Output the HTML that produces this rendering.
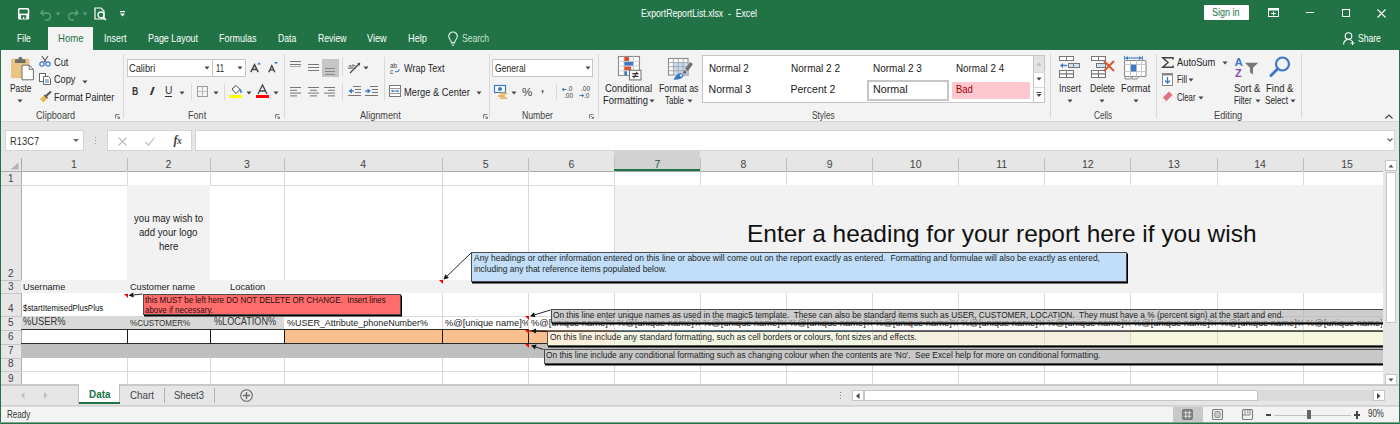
<!DOCTYPE html><html><head><meta charset="utf-8"><style>
html,body{margin:0;padding:0;}
body{width:1400px;height:424px;overflow:hidden;position:relative;background:#f3f3f3;font-family:"Liberation Sans",sans-serif;}
.t{position:absolute;white-space:pre;font-family:"Liberation Sans",sans-serif;transform-origin:0 0;}
svg{overflow:visible}
</style></head><body>
<div style="position:absolute;left:0px;top:0px;width:1400px;height:50px;background:#217346"></div>
<div style="position:absolute;left:48px;top:27px;width:45px;height:23px;background:#f3f3f3"></div>
<div class="t" style="left:641.00px;top:8.00px;font-size:10px;line-height:11px;color:#ffffff;transform:scaleX(0.8696);">ExportReportList.xlsx  -  Excel</div>
<div class="t" style="left:16.60px;top:32.00px;font-size:10.5px;line-height:12px;color:#ffffff;transform:scaleX(0.8163);">File</div>
<div class="t" style="left:104.00px;top:32.00px;font-size:10.5px;line-height:12px;color:#ffffff;transform:scaleX(0.8533);">Insert</div>
<div class="t" style="left:147.90px;top:32.00px;font-size:10.5px;line-height:12px;color:#ffffff;transform:scaleX(0.8481);">Page Layout</div>
<div class="t" style="left:219.30px;top:32.00px;font-size:10.5px;line-height:12px;color:#ffffff;transform:scaleX(0.8565);">Formulas</div>
<div class="t" style="left:278.20px;top:32.00px;font-size:10.5px;line-height:12px;color:#ffffff;transform:scaleX(0.8195);">Data</div>
<div class="t" style="left:317.80px;top:32.00px;font-size:10.5px;line-height:12px;color:#ffffff;transform:scaleX(0.8275);">Review</div>
<div class="t" style="left:367.10px;top:32.00px;font-size:10.5px;line-height:12px;color:#ffffff;transform:scaleX(0.8726);">View</div>
<div class="t" style="left:407.80px;top:32.00px;font-size:10.5px;line-height:12px;color:#ffffff;transform:scaleX(0.8759);">Help</div>
<div class="t" style="left:57.50px;top:32.00px;font-size:10.5px;line-height:12px;color:#217346;transform:scaleX(0.9096);">Home</div>
<div class="t" style="left:461.80px;top:32.00px;font-size:10.5px;line-height:12px;color:#cfe2d6;transform:scaleX(0.8112);">Search</div>
<svg style="position:absolute;left:448px;top:31px;" width="10" height="16" viewBox="0 0 10 16"><path d="M5 1a4.3 4.3 0 0 0-4.3 4.3c0 2.2 1.6 3.4 2.6 5.2v1.3h3.4v-1.3c1-1.8 2.6-3 2.6-5.2A4.3 4.3 0 0 0 5 1z" fill="none" stroke="#e6efe9" stroke-width="1.1"/><path d="M3.6 13h2.8M4.2 14.5h1.6" stroke="#cfe2d6" stroke-width="1"/></svg>
<svg style="position:absolute;left:17px;top:7px;" width="13" height="13" viewBox="0 0 13 13"><rect x="1.7" y="1.7" width="9.8" height="10" rx="0.8" fill="none" stroke="#fff" stroke-width="1.5"/><rect x="1.7" y="6.6" width="9.8" height="5.1" fill="#fff"/><rect x="4" y="8.2" width="5.2" height="3.5" fill="#217346"/><rect x="6" y="9.8" width="1.3" height="1.9" fill="#fff"/></svg>
<svg style="position:absolute;left:40px;top:8px;" width="12" height="12" viewBox="0 0 12 12"><path d="M3 2 L1 5 L4 7.5 M1.5 5 H7 a3.5 3.5 0 0 1 0 7 H5" fill="none" stroke="#5fa07c" stroke-width="1.4"/></svg>
<svg style="position:absolute;left:55px;top:12px;" width="6" height="4" viewBox="0 0 6 4"><path d="M0.5 0.5 L5.5 0.5 L3 3.5 Z" fill="#5fa07c"/></svg>
<svg style="position:absolute;left:67px;top:8px;" width="12" height="12" viewBox="0 0 12 12"><path d="M9 2 L11 5 L8 7.5 M10.5 5 H5 a3.5 3.5 0 0 0 0 7 H7" fill="none" stroke="#5fa07c" stroke-width="1.4"/></svg>
<svg style="position:absolute;left:82px;top:12px;" width="6" height="4" viewBox="0 0 6 4"><path d="M0.5 0.5 L5.5 0.5 L3 3.5 Z" fill="#5fa07c"/></svg>
<svg style="position:absolute;left:94px;top:7px;" width="13" height="14" viewBox="0 0 13 14"><path d="M1 1h6l3 3v8H1z" fill="none" stroke="#fff" stroke-width="1.2"/><circle cx="7" cy="8" r="3" fill="none" stroke="#fff" stroke-width="1.3"/><path d="M9 10l3 3" stroke="#fff" stroke-width="1.5"/></svg>
<svg style="position:absolute;left:120px;top:11px;" width="5" height="6" viewBox="0 0 5 6"><rect x="0" y="0" width="5" height="1.2" fill="#fff"/><path d="M0 2.5h5L2.5 5.5z" fill="#fff"/></svg>
<div style="position:absolute;left:1203.5px;top:5px;width:45px;height:15px;background:#ffffff;border-radius:1px"></div>
<div class="t" style="left:1212.20px;top:6.00px;font-size:10.5px;line-height:12px;color:#217346;transform:scaleX(0.8590);">Sign in</div>
<svg style="position:absolute;left:1268px;top:8px;" width="11" height="9" viewBox="0 0 11 9"><rect x="0.5" y="0.5" width="10" height="8" fill="none" stroke="#fff" stroke-width="1"/><rect x="0.5" y="0.5" width="10" height="2" fill="#fff"/><path d="M3 5.5h5M5.5 3.5v4" stroke="#fff" stroke-width="1"/></svg>
<div style="position:absolute;left:1306px;top:12px;width:8px;height:1px;background:#fff"></div>
<div style="position:absolute;left:1341.5px;top:8.5px;width:8px;height:8px;border:1px solid #fff;box-sizing:border-box"></div>
<svg style="position:absolute;left:1377px;top:8.5px;" width="9" height="9" viewBox="0 0 9 9"><path d="M0.5 0.5L8.5 8.5M8.5 0.5L0.5 8.5" stroke="#fff" stroke-width="1.1"/></svg>
<svg style="position:absolute;left:1343px;top:32px;" width="13" height="13" viewBox="0 0 13 13"><circle cx="5.5" cy="4" r="3.3" fill="none" stroke="#fff" stroke-width="1.1"/><path d="M0.5 12.5 Q1 7.5 5.5 7.5 Q8 7.5 9 9" fill="none" stroke="#fff" stroke-width="1.1"/><path d="M9.5 9v4M7.5 11h4" stroke="#fff" stroke-width="1.1"/></svg>
<div class="t" style="left:1358.00px;top:32.00px;font-size:10.5px;line-height:12px;color:#ffffff;transform:scaleX(0.8133);">Share</div>
<div style="position:absolute;left:0px;top:50px;width:1400px;height:72px;background:#f3f3f3;border-bottom:1px solid #d5d5d5;box-sizing:border-box"></div>
<div style="position:absolute;left:123px;top:54px;width:1px;height:64px;background:#d9d9d9"></div>
<div style="position:absolute;left:283.6px;top:54px;width:1px;height:64px;background:#d9d9d9"></div>
<div style="position:absolute;left:488.5px;top:54px;width:1px;height:64px;background:#d9d9d9"></div>
<div style="position:absolute;left:597.6px;top:54px;width:1px;height:64px;background:#d9d9d9"></div>
<div style="position:absolute;left:1050px;top:54px;width:1px;height:64px;background:#d9d9d9"></div>
<div style="position:absolute;left:1156px;top:54px;width:1px;height:64px;background:#d9d9d9"></div>
<div style="position:absolute;left:1301px;top:54px;width:1px;height:64px;background:#d9d9d9"></div>
<div class="t" style="left:36.10px;top:110.00px;font-size:10px;line-height:11px;color:#444444;transform:scaleX(0.9136);">Clipboard</div>
<div class="t" style="left:188.10px;top:110.00px;font-size:10px;line-height:11px;color:#444444;transform:scaleX(0.9100);">Font</div>
<div class="t" style="left:359.60px;top:110.00px;font-size:10px;line-height:11px;color:#444444;transform:scaleX(0.9156);">Alignment</div>
<div class="t" style="left:521.60px;top:110.00px;font-size:10px;line-height:11px;color:#444444;transform:scaleX(0.8692);">Number</div>
<div class="t" style="left:812.00px;top:110.00px;font-size:10px;line-height:11px;color:#444444;transform:scaleX(0.8330);">Styles</div>
<div class="t" style="left:1093.60px;top:110.00px;font-size:10px;line-height:11px;color:#444444;transform:scaleX(0.8180);">Cells</div>
<div class="t" style="left:1213.80px;top:110.00px;font-size:10px;line-height:11px;color:#444444;transform:scaleX(0.9216);">Editing</div>
<svg style="position:absolute;left:114.5px;top:114px;" width="5" height="5" viewBox="0 0 5 5"><path d="M0.5 4.5V0.5H4.5" fill="none" stroke="#777" stroke-width="0.9"/><path d="M1.5 1.5L4.5 4.5M2.5 4.5H4.5V2.5" fill="none" stroke="#777" stroke-width="0.9"/></svg>
<svg style="position:absolute;left:275px;top:114px;" width="5" height="5" viewBox="0 0 5 5"><path d="M0.5 4.5V0.5H4.5" fill="none" stroke="#777" stroke-width="0.9"/><path d="M1.5 1.5L4.5 4.5M2.5 4.5H4.5V2.5" fill="none" stroke="#777" stroke-width="0.9"/></svg>
<svg style="position:absolute;left:482.5px;top:114px;" width="5" height="5" viewBox="0 0 5 5"><path d="M0.5 4.5V0.5H4.5" fill="none" stroke="#777" stroke-width="0.9"/><path d="M1.5 1.5L4.5 4.5M2.5 4.5H4.5V2.5" fill="none" stroke="#777" stroke-width="0.9"/></svg>
<svg style="position:absolute;left:588.8px;top:114px;" width="5" height="5" viewBox="0 0 5 5"><path d="M0.5 4.5V0.5H4.5" fill="none" stroke="#777" stroke-width="0.9"/><path d="M1.5 1.5L4.5 4.5M2.5 4.5H4.5V2.5" fill="none" stroke="#777" stroke-width="0.9"/></svg>
<svg style="position:absolute;left:1385px;top:114px;" width="8" height="5" viewBox="0 0 8 5"><path d="M0.5 4.5L4 1L7.5 4.5" fill="none" stroke="#444" stroke-width="1.2"/></svg>
<svg style="position:absolute;left:10px;top:56px;" width="24" height="25" viewBox="0 0 24 25"><rect x="1" y="2.8" width="18.5" height="19.5" rx="1.2" fill="#e8c582"/><path d="M5 7V4.2Q5 3.2 6 3.2H8.3Q8.6 0.8 10.3 0.8Q12 0.8 12.3 3.2H14.6Q15.6 3.2 15.6 4.2V7Z" fill="#6d6d6d"/><path d="M12 9.2h7.2l4.2 4.2v10.4H12z" fill="#fff" stroke="#6d6d6d" stroke-width="1"/><path d="M19.2 9.2v4.2h4.2" fill="none" stroke="#6d6d6d" stroke-width="1"/></svg>
<div class="t" style="left:9.60px;top:82.00px;font-size:10.5px;line-height:12px;color:#262626;transform:scaleX(0.8014);">Paste</div>
<svg style="position:absolute;left:17px;top:99px;" width="6" height="4" viewBox="0 0 6 4"><path d="M0.5 0.5 L5.5 0.5 L3 3.5 Z" fill="#444"/></svg>
<svg style="position:absolute;left:39px;top:55px;" width="12" height="12" viewBox="0 0 12 12"><path d="M3 1L7 7M9 1L5 7" stroke="#555" stroke-width="1.1"/><circle cx="3" cy="9" r="2.2" fill="none" stroke="#3c78c8" stroke-width="1.2"/><circle cx="9" cy="9" r="2.2" fill="none" stroke="#3c78c8" stroke-width="1.2"/></svg>
<div class="t" style="left:53.80px;top:56.00px;font-size:10.5px;line-height:12px;color:#262626;transform:scaleX(0.8819);">Cut</div>
<svg style="position:absolute;left:39px;top:73px;" width="12" height="12" viewBox="0 0 12 12"><rect x="0.5" y="0.5" width="6" height="8" fill="#fff" stroke="#666"/><path d="M4.5 3.5h5l2 2v6h-7z" fill="#fff" stroke="#666"/><path d="M6 7h4M6 9h4" stroke="#3c78c8"/></svg>
<div class="t" style="left:53.80px;top:73.00px;font-size:10.5px;line-height:12px;color:#262626;transform:scaleX(0.8728);">Copy</div>
<svg style="position:absolute;left:82px;top:80px;" width="6" height="4" viewBox="0 0 6 4"><path d="M0.5 0.5 L5.5 0.5 L3 3.5 Z" fill="#444"/></svg>
<svg style="position:absolute;left:39px;top:91px;" width="13" height="12" viewBox="0 0 13 12"><path d="M7 5L12 0.5" stroke="#555" stroke-width="2"/><path d="M1 8L6 3.5L9 6.5L4.5 11.5Z" fill="#e8b45a"/><path d="M5.5 4L8.5 7" stroke="#555" stroke-width="1.6"/></svg>
<div class="t" style="left:53.80px;top:91.00px;font-size:10.5px;line-height:12px;color:#262626;transform:scaleX(0.8667);">Format Painter</div>
<div style="position:absolute;left:126.7px;top:59px;width:86px;height:18px;background:#fff;border:1px solid #c6c6c6;box-sizing:border-box"></div>
<div style="position:absolute;left:212px;top:59px;width:34px;height:18px;background:#fff;border:1px solid #c6c6c6;box-sizing:border-box"></div>
<div class="t" style="left:129.20px;top:63.00px;font-size:10px;line-height:11px;color:#262626;transform:scaleX(0.9242);">Calibri</div>
<svg style="position:absolute;left:203.7px;top:66px;" width="6" height="4" viewBox="0 0 6 4"><path d="M0.5 0.5 L5.5 0.5 L3 3.5 Z" fill="#444"/></svg>
<div class="t" style="left:215.50px;top:63.00px;font-size:10px;line-height:11px;color:#262626;transform:scaleX(0.7692);">11</div>
<svg style="position:absolute;left:237.3px;top:66px;" width="6" height="4" viewBox="0 0 6 4"><path d="M0.5 0.5 L5.5 0.5 L3 3.5 Z" fill="#444"/></svg>
<svg style="position:absolute;left:249px;top:60px;" width="14" height="14" viewBox="0 0 14 14"><path d="M1.8 12.2L5.5 4.6L9.2 12.2M3.2 9.5h4.6" fill="none" stroke="#444" stroke-width="1.5"/><path d="M8 4.4L10 2.2L12 4.4Z" fill="#3c78c8"/></svg>
<svg style="position:absolute;left:267px;top:60px;" width="12" height="14" viewBox="0 0 12 14"><path d="M1.8 12.2L4.8 5.6L7.8 12.2M2.9 9.9h3.8" fill="none" stroke="#444" stroke-width="1.35"/><path d="M7 2H11L9 4.2Z" fill="#3c78c8"/></svg>
<div class="t" style="left:131.50px;top:85.00px;font-size:10.5px;line-height:12px;color:#333;font-weight:700;transform:scaleX(0.8201);">B</div>
<div class="t" style="left:149.00px;top:85.00px;font-size:10.5px;line-height:12px;color:#333;transform:scaleX(2.0408);font-style:italic;">I</div>
<div class="t" style="left:165.00px;top:84.00px;font-size:10.5px;line-height:12px;color:#333;transform:scaleX(0.9788);">U</div>
<div style="position:absolute;left:165px;top:96px;width:7.4px;height:1px;background:#333"></div>
<svg style="position:absolute;left:179px;top:91px;" width="6" height="4" viewBox="0 0 6 4"><path d="M0.5 0.5 L5.5 0.5 L3 3.5 Z" fill="#444"/></svg>
<div style="position:absolute;left:190.8px;top:84px;width:1px;height:16px;background:#d9d9d9"></div>
<svg style="position:absolute;left:197px;top:86px;" width="11" height="11" viewBox="0 0 11 11"><rect x="0.5" y="0.5" width="10" height="10" fill="none" stroke="#999"/><path d="M5.5 0.5v10M0.5 5.5h10" stroke="#bbb"/></svg>
<svg style="position:absolute;left:212.5px;top:91px;" width="6" height="4" viewBox="0 0 6 4"><path d="M0.5 0.5 L5.5 0.5 L3 3.5 Z" fill="#444"/></svg>
<div style="position:absolute;left:224.4px;top:84px;width:1px;height:16px;background:#d9d9d9"></div>
<svg style="position:absolute;left:229px;top:84px;" width="14" height="14" viewBox="0 0 14 14"><path d="M3 5L7 1.5L11 5.5L7 9.5Z" fill="#fff" stroke="#444" stroke-width="1"/><path d="M10.5 5 q2 2 1.5 4" fill="none" stroke="#3c78c8" stroke-width="1.5"/><rect x="0.5" y="11" width="12.5" height="3" fill="#ffff00"/></svg>
<svg style="position:absolute;left:246px;top:91px;" width="6" height="4" viewBox="0 0 6 4"><path d="M0.5 0.5 L5.5 0.5 L3 3.5 Z" fill="#444"/></svg>
<svg style="position:absolute;left:256px;top:84px;" width="13" height="14" viewBox="0 0 13 14"><path d="M2 10L6.5 1L11 10M3.8 7h5.4" fill="none" stroke="#444" stroke-width="1.3"/><rect x="0" y="11" width="13" height="3" fill="#ff0000"/></svg>
<svg style="position:absolute;left:272.7px;top:91px;" width="6" height="4" viewBox="0 0 6 4"><path d="M0.5 0.5 L5.5 0.5 L3 3.5 Z" fill="#444"/></svg>
<svg style="position:absolute;left:290px;top:60.5px;" width="12" height="7" viewBox="0 0 12 7"><rect x="0" y="0" width="11" height="1" fill="#777"/><rect x="0" y="3" width="11" height="1" fill="#777"/></svg>
<div style="position:absolute;left:290px;top:66px;width:11px;height:0.8px;background:#aaa"></div>
<svg style="position:absolute;left:307.5px;top:64px;" width="12" height="10" viewBox="0 0 12 10"><rect x="0" y="0" width="11" height="1" fill="#777"/><rect x="0" y="3" width="11" height="1" fill="#777"/><rect x="0" y="6" width="11" height="1" fill="#777"/></svg>
<div style="position:absolute;left:321.6px;top:58.8px;width:17px;height:18px;background:#c6c6c6"></div>
<svg style="position:absolute;left:325px;top:67.5px;" width="12" height="10" viewBox="0 0 12 10"><rect x="0" y="0" width="10" height="1" fill="#888"/><rect x="0" y="3" width="10" height="1" fill="#888"/><rect x="0" y="6" width="10" height="1" fill="#888"/></svg>
<div style="position:absolute;left:342px;top:57px;width:1px;height:19px;background:#d9d9d9"></div>
<svg style="position:absolute;left:348px;top:62px;" width="13" height="12" viewBox="0 0 13 12"><text x="0" y="7" font-family="Liberation Sans" font-size="7" fill="#444">ab</text><path d="M2 11L12 1" stroke="#444" stroke-width="1.1"/><path d="M12 1l-3 0.5 2.5 2.5z" fill="#444"/></svg>
<svg style="position:absolute;left:363px;top:66px;" width="6" height="4" viewBox="0 0 6 4"><path d="M0.5 0.5 L5.5 0.5 L3 3.5 Z" fill="#444"/></svg>
<div style="position:absolute;left:383.5px;top:57px;width:1px;height:43px;background:#d9d9d9"></div>
<svg style="position:absolute;left:390px;top:62px;" width="11" height="12" viewBox="0 0 11 12"><text x="0" y="6" font-family="Liberation Sans" font-size="6.5" fill="#444">ab</text><text x="0" y="11.5" font-family="Liberation Sans" font-size="6.5" fill="#444">c</text><path d="M5 9.5q3 1 4.5-2" fill="none" stroke="#3c78c8" stroke-width="1.1"/></svg>
<div class="t" style="left:403.80px;top:62.00px;font-size:10.5px;line-height:12px;color:#262626;transform:scaleX(0.8617);">Wrap Text</div>
<svg style="position:absolute;left:290px;top:87px;" width="12" height="12.2" viewBox="0 0 12 12.2"><rect x="0" y="0.0" width="11" height="1" fill="#777"/><rect x="0" y="2.8" width="7" height="1" fill="#777"/><rect x="0" y="5.6" width="11" height="1" fill="#777"/><rect x="0" y="8.399999999999999" width="7" height="1" fill="#777"/></svg>
<svg style="position:absolute;left:307.5px;top:87px;" width="12" height="12.2" viewBox="0 0 12 12.2"><rect x="0" y="0.0" width="11" height="1" fill="#777"/><rect x="2" y="2.8" width="7" height="1" fill="#777"/><rect x="0" y="5.6" width="11" height="1" fill="#777"/><rect x="2" y="8.399999999999999" width="7" height="1" fill="#777"/></svg>
<svg style="position:absolute;left:324px;top:87px;" width="12" height="12.2" viewBox="0 0 12 12.2"><rect x="0" y="0.0" width="11" height="1" fill="#777"/><rect x="4" y="2.8" width="7" height="1" fill="#777"/><rect x="0" y="5.6" width="11" height="1" fill="#777"/><rect x="4" y="8.399999999999999" width="7" height="1" fill="#777"/></svg>
<div style="position:absolute;left:342px;top:84px;width:1px;height:16px;background:#d9d9d9"></div>
<svg style="position:absolute;left:348px;top:85px;" width="13" height="12" viewBox="0 0 13 12"><path d="M5 1.5h8M7 4.5h6M7 7.5h6M0 10.5h13" stroke="#777" stroke-width="1"/><path d="M0.5 6L4 3.5v5z" fill="#3c78c8"/><path d="M2 6h4" stroke="#3c78c8" stroke-width="1.3"/></svg>
<svg style="position:absolute;left:365px;top:85px;" width="13" height="12" viewBox="0 0 13 12"><path d="M5 1.5h8M7 4.5h6M7 7.5h6M0 10.5h13" stroke="#777" stroke-width="1"/><path d="M6 6L2.5 3.5v5z" fill="#3c78c8"/><path d="M0 6h4" stroke="#3c78c8" stroke-width="1.3"/></svg>
<svg style="position:absolute;left:388.8px;top:85px;" width="12" height="12" viewBox="0 0 12 12"><rect x="0.5" y="0.5" width="11" height="11" fill="#fff" stroke="#777"/><path d="M0.5 3.5h11M0.5 8.5h11" stroke="#999"/><path d="M2.5 6h7" stroke="#3c78c8" stroke-width="1.1"/><path d="M2 6l1.8-1.5v3zM10 6l-1.8-1.5v3z" fill="#3c78c8"/></svg>
<div class="t" style="left:403.80px;top:86.00px;font-size:10.5px;line-height:12px;color:#262626;transform:scaleX(0.8890);">Merge &amp; Center</div>
<svg style="position:absolute;left:476.4px;top:91px;" width="6" height="4" viewBox="0 0 6 4"><path d="M0.5 0.5 L5.5 0.5 L3 3.5 Z" fill="#444"/></svg>
<div style="position:absolute;left:492.4px;top:59px;width:101px;height:18px;background:#fff;border:1px solid #c6c6c6;box-sizing:border-box"></div>
<div class="t" style="left:495.00px;top:63.00px;font-size:10px;line-height:11px;color:#262626;transform:scaleX(0.8596);">General</div>
<svg style="position:absolute;left:584.5px;top:66px;" width="6" height="4" viewBox="0 0 6 4"><path d="M0.5 0.5 L5.5 0.5 L3 3.5 Z" fill="#444"/></svg>
<svg style="position:absolute;left:494px;top:84.5px;" width="14" height="14" viewBox="0 0 14 14"><rect x="0.5" y="0.5" width="11" height="7" fill="#fff" stroke="#3c78c8" stroke-width="1.2"/><circle cx="6" cy="4" r="2" fill="#3c78c8"/><rect x="6" y="7.5" width="7" height="2" fill="#e8b45a"/><rect x="4" y="10" width="7" height="2" fill="#e8b45a"/><rect x="6" y="12.3" width="7" height="1.7" fill="#e8b45a"/></svg>
<svg style="position:absolute;left:510.6px;top:91px;" width="6" height="4" viewBox="0 0 6 4"><path d="M0.5 0.5 L5.5 0.5 L3 3.5 Z" fill="#444"/></svg>
<div class="t" style="left:522.40px;top:86.00px;font-size:11.5px;line-height:12px;color:#444;transform:scaleX(1.0064);">%</div>
<div class="t" style="left:541.00px;top:82.00px;font-size:11px;line-height:12px;color:#444;font-weight:700;transform:scaleX(0.9740);">,</div>
<div style="position:absolute;left:556.4px;top:84px;width:1px;height:16px;background:#d9d9d9"></div>
<svg style="position:absolute;left:562px;top:86px;" width="12" height="12" viewBox="0 0 12 12"><text x="5" y="5" font-family="Liberation Sans" font-size="6.5" fill="#444">.0</text><text x="2" y="11.5" font-family="Liberation Sans" font-size="6.5" fill="#444">.00</text><path d="M0.5 3.5h4" stroke="#3c78c8" stroke-width="1.1"/><path d="M0 3.5l2-2v4z" fill="#3c78c8"/></svg>
<svg style="position:absolute;left:579px;top:86px;" width="12" height="12" viewBox="0 0 12 12"><text x="2" y="5" font-family="Liberation Sans" font-size="6.5" fill="#444">.00</text><text x="5" y="11.5" font-family="Liberation Sans" font-size="6.5" fill="#444">.0</text><path d="M0.5 9.5h4" stroke="#3c78c8" stroke-width="1.1"/><path d="M5 9.5l-2-2v4z" fill="#3c78c8"/></svg>
<svg style="position:absolute;left:617px;top:56px;" width="26" height="26" viewBox="0 0 26 26"><rect x="1.5" y="0.5" width="21" height="19" fill="#fff" stroke="#8a8a8a" stroke-width="1.1"/><path d="M1.5 5.25h21M1.5 10h21M1.5 14.75h21M7 0.5v19M16.5 0.5v19" stroke="#cfcfcf" stroke-width="1"/><rect x="7.3" y="1" width="4.8" height="4" fill="#d9522c"/><rect x="7.3" y="5.8" width="8.8" height="3.8" fill="#3c78c8"/><rect x="7.3" y="10.5" width="6.8" height="3.8" fill="#d9522c"/><rect x="7.3" y="15.3" width="2.8" height="3.8" fill="#3c78c8"/><rect x="12.5" y="14.3" width="11.5" height="9.6" fill="#fff" stroke="#777" stroke-width="1.1"/><path d="M15.3 17.6h6.2M15.3 20.4h6.2M20 15.8L16.6 22.3" stroke="#333" stroke-width="1.1"/></svg>
<div class="t" style="left:605.20px;top:82.00px;font-size:10.5px;line-height:12px;color:#262626;transform:scaleX(0.8981);">Conditional</div>
<div class="t" style="left:603.00px;top:94.00px;font-size:10.5px;line-height:12px;color:#262626;transform:scaleX(0.8966);">Formatting</div>
<svg style="position:absolute;left:649px;top:98.5px;" width="6" height="4" viewBox="0 0 6 4"><path d="M0.5 0.5 L5.5 0.5 L3 3.5 Z" fill="#444"/></svg>
<svg style="position:absolute;left:667px;top:56px;" width="26" height="26" viewBox="0 0 26 26"><rect x="1.5" y="2.5" width="19.5" height="16.5" fill="#fff" stroke="#8a8a8a" stroke-width="1.1"/><rect x="6.4" y="6.6" width="14" height="11.8" fill="#c5dcf3"/><path d="M6.4 2.5v16.5M11.2 2.5v16.5M16.1 2.5v16.5M1.5 6.6h19.5M1.5 10.7h19.5M1.5 14.8h19.5" stroke="#a8a8a8" stroke-width="1"/><path d="M24.5 7L19.5 14" stroke="#6f6f6f" stroke-width="3.6"/><path d="M18.6 15.2L17 17.5" stroke="#6f6f6f" stroke-width="3"/><path d="M6.5 23.8 Q8.5 19 13.5 16.8 L16.8 19.6 Q15.5 23.8 6.5 23.8Z" fill="#3c78c8"/><circle cx="14" cy="19.5" r="1.1" fill="#fff"/></svg>
<div class="t" style="left:659.00px;top:82.00px;font-size:10.5px;line-height:12px;color:#262626;transform:scaleX(0.8339);">Format as</div>
<div class="t" style="left:665.30px;top:94.00px;font-size:10.5px;line-height:12px;color:#262626;transform:scaleX(0.7571);">Table</div>
<svg style="position:absolute;left:687px;top:98.5px;" width="6" height="4" viewBox="0 0 6 4"><path d="M0.5 0.5 L5.5 0.5 L3 3.5 Z" fill="#444"/></svg>
<div style="position:absolute;left:702px;top:55.3px;width:343px;height:47.5px;background:#fff;border:1px solid #c6c6c6;box-sizing:border-box"></div>
<div class="t" style="left:708.60px;top:62.00px;font-size:10.5px;line-height:12px;color:#1a1a1a;transform:scaleX(0.9348);">Normal 2</div>
<div class="t" style="left:790.50px;top:62.00px;font-size:10.5px;line-height:12px;color:#1a1a1a;transform:scaleX(0.9543);">Normal 2 2</div>
<div class="t" style="left:872.70px;top:62.00px;font-size:10.5px;line-height:12px;color:#1a1a1a;transform:scaleX(0.9504);">Normal 2 3</div>
<div class="t" style="left:955.50px;top:62.00px;font-size:10.5px;line-height:12px;color:#1a1a1a;transform:scaleX(0.9368);">Normal 2 4</div>
<div class="t" style="left:708.60px;top:83.00px;font-size:10.5px;line-height:12px;color:#1a1a1a;">Normal 3</div>
<div class="t" style="left:790.50px;top:83.00px;font-size:10.5px;line-height:12px;color:#1a1a1a;">Percent 2</div>
<div style="position:absolute;left:867.4px;top:79.7px;width:82px;height:21px;border:2px solid #c6c6c6;box-sizing:border-box;background:#fff"></div>
<div class="t" style="left:873.30px;top:83.00px;font-size:10.5px;line-height:12px;color:#1a1a1a;transform:scaleX(1.0247);">Normal</div>
<div style="position:absolute;left:952px;top:81.5px;width:78px;height:17px;background:#ffc7ce"></div>
<div class="t" style="left:955.50px;top:83.00px;font-size:10.5px;line-height:12px;color:#9c0006;transform:scaleX(0.8989);">Bad</div>
<div style="position:absolute;left:1033px;top:55.3px;width:12px;height:47.5px;background:#fff;border:1px solid #c6c6c6;box-sizing:border-box"></div>
<div style="position:absolute;left:1034px;top:56.3px;width:10px;height:15.7px;background:#e3e3e3"></div>
<svg style="position:absolute;left:1036px;top:62px;" width="6" height="4" viewBox="0 0 6 4"><path d="M0.5 3.5L3 0.5L5.5 3.5Z" fill="#bbb"/></svg>
<div style="position:absolute;left:1033px;top:72px;width:12px;height:1px;background:#d9d9d9"></div>
<svg style="position:absolute;left:1036px;top:77px;" width="6" height="4" viewBox="0 0 6 4"><path d="M0.5 0.5L5.5 0.5L3 3.5Z" fill="#444"/></svg>
<div style="position:absolute;left:1033px;top:86.8px;width:12px;height:1px;background:#d9d9d9"></div>
<svg style="position:absolute;left:1036px;top:92px;" width="6" height="6" viewBox="0 0 6 6"><rect x="0.5" y="0" width="5" height="1" fill="#444"/><path d="M0.5 2L5.5 2L3 5Z" fill="#444"/></svg>
<svg style="position:absolute;left:1059px;top:56px;" width="22" height="22" viewBox="0 0 22 22"><rect x="0.5" y="0.5" width="7" height="4" fill="#fff" stroke="#777"/><rect x="7.5" y="0.5" width="7" height="4" fill="#fff" stroke="#777"/><rect x="9.5" y="7.5" width="5" height="4" fill="#cfe0f5" stroke="#777"/><rect x="14.5" y="7.5" width="6" height="4" fill="#cfe0f5" stroke="#777"/><path d="M2 9.5h6" stroke="#3c78c8" stroke-width="1.4"/><path d="M1 9.5l3-2.5v5z" fill="#3c78c8"/><rect x="0.5" y="14.5" width="7" height="3.5" fill="#fff" stroke="#777"/><rect x="7.5" y="14.5" width="7" height="3.5" fill="#fff" stroke="#777"/><rect x="0.5" y="18" width="7" height="3.5" fill="#fff" stroke="#777"/><rect x="7.5" y="18" width="7" height="3.5" fill="#fff" stroke="#777"/></svg>
<div class="t" style="left:1058.80px;top:82.00px;font-size:10.5px;line-height:12px;color:#262626;transform:scaleX(0.8343);">Insert</div>
<svg style="position:absolute;left:1066.5px;top:99px;" width="6" height="4" viewBox="0 0 6 4"><path d="M0.5 0.5 L5.5 0.5 L3 3.5 Z" fill="#444"/></svg>
<svg style="position:absolute;left:1091px;top:56px;" width="24" height="22" viewBox="0 0 24 22"><rect x="0.5" y="0.5" width="7" height="4" fill="#fff" stroke="#777"/><rect x="7.5" y="0.5" width="7" height="4" fill="#fff" stroke="#777"/><rect x="5.5" y="7.5" width="9" height="4" fill="#cfe0f5" stroke="#777"/><rect x="0.5" y="14.5" width="7" height="3.5" fill="#fff" stroke="#777"/><rect x="7.5" y="14.5" width="7" height="3.5" fill="#fff" stroke="#777"/><rect x="0.5" y="18" width="7" height="3.5" fill="#fff" stroke="#777"/><rect x="7.5" y="18" width="7" height="3.5" fill="#fff" stroke="#777"/><path d="M13 5L23 15M23 5L13 15" stroke="#d9522c" stroke-width="1.8"/></svg>
<div class="t" style="left:1090.00px;top:82.00px;font-size:10.5px;line-height:12px;color:#262626;transform:scaleX(0.8173);">Delete</div>
<svg style="position:absolute;left:1099px;top:99px;" width="6" height="4" viewBox="0 0 6 4"><path d="M0.5 0.5 L5.5 0.5 L3 3.5 Z" fill="#444"/></svg>
<svg style="position:absolute;left:1123px;top:55px;" width="25" height="26" viewBox="0 0 25 26"><path d="M2 3h17" stroke="#3c78c8" stroke-width="1.1"/><path d="M1.5 0.8v4.4M19.5 0.8v4.4" stroke="#3c78c8" stroke-width="0.9"/><path d="M2.5 3l2.5-2v4zM18.5 3l-2.5-2v4z" fill="#3c78c8"/><rect x="1.5" y="5.5" width="21.5" height="16" rx="1" fill="#fff" stroke="#8a8a8a" stroke-width="1.1"/><path d="M7.5 5.5v16M13.5 5.5v16M18.5 5.5v16M1.5 9.5h21.5M1.5 16.5h21.5" stroke="#c8c8c8" stroke-width="1"/><rect x="7.8" y="9.8" width="5.4" height="6.6" fill="#3c78c8"/><path d="M2 21.5v2.5h5.5l1.5-2.5M9 21.5v2.5h5l1.5-2.5" fill="none" stroke="#8a8a8a" stroke-width="1"/></svg>
<div class="t" style="left:1121.00px;top:82.00px;font-size:10.5px;line-height:12px;color:#262626;transform:scaleX(0.8787);">Format</div>
<svg style="position:absolute;left:1132.5px;top:99px;" width="6" height="4" viewBox="0 0 6 4"><path d="M0.5 0.5 L5.5 0.5 L3 3.5 Z" fill="#444"/></svg>
<svg style="position:absolute;left:1161.5px;top:57px;" width="12" height="11" viewBox="0 0 12 11"><path d="M11 2.5V0.8H0.8L6 5.5L0.8 10.2H11V8.5" fill="none" stroke="#444" stroke-width="1.5"/></svg>
<div class="t" style="left:1176.70px;top:56.00px;font-size:10.5px;line-height:12px;color:#262626;transform:scaleX(0.8864);">AutoSum</div>
<svg style="position:absolute;left:1222px;top:61px;" width="6" height="4" viewBox="0 0 6 4"><path d="M0.5 0.5 L5.5 0.5 L3 3.5 Z" fill="#444"/></svg>
<svg style="position:absolute;left:1162px;top:72.5px;" width="11" height="13" viewBox="0 0 11 13"><rect x="0.5" y="0.5" width="10" height="12" fill="#fff" stroke="#888"/><rect x="0.5" y="0.5" width="10" height="2" fill="#888"/><path d="M5.5 4v6M3 7.5l2.5 2.5 2.5-2.5" fill="none" stroke="#3c78c8" stroke-width="1.3"/></svg>
<div class="t" style="left:1176.70px;top:73.00px;font-size:10.5px;line-height:12px;color:#262626;transform:scaleX(0.7470);">Fill</div>
<svg style="position:absolute;left:1188px;top:78px;" width="6" height="4" viewBox="0 0 6 4"><path d="M0.5 0.5 L5.5 0.5 L3 3.5 Z" fill="#444"/></svg>
<svg style="position:absolute;left:1162px;top:91px;" width="11" height="11" viewBox="0 0 11 11"><path d="M7 0.5l3.5 3.5-6.5 6.5-3.5-3.5z" fill="#e0707f"/><path d="M1 7l3 3" stroke="#f3f3f3" stroke-width="0.8"/></svg>
<div class="t" style="left:1176.70px;top:91.00px;font-size:10.5px;line-height:12px;color:#262626;transform:scaleX(0.7372);">Clear</div>
<svg style="position:absolute;left:1197.5px;top:95.5px;" width="6" height="4" viewBox="0 0 6 4"><path d="M0.5 0.5 L5.5 0.5 L3 3.5 Z" fill="#444"/></svg>
<svg style="position:absolute;left:1235px;top:57px;" width="24" height="21" viewBox="0 0 24 21"><text x="-0.5" y="9.2" font-family="Liberation Sans" font-weight="700" font-size="11.5" fill="#3c78c8" transform="scale(1,0.95)">A</text><text x="0" y="20.4" font-family="Liberation Sans" font-weight="700" font-size="11" fill="#8b46b0">Z</text><path d="M9.8 5.8h13.4l-5.2 5v6.6l-3-2.2v-4.4z" fill="#777"/></svg>
<div class="t" style="left:1233.60px;top:82.00px;font-size:10.5px;line-height:12px;color:#262626;transform:scaleX(0.9044);">Sort &amp;</div>
<div class="t" style="left:1233.60px;top:94.00px;font-size:10.5px;line-height:12px;color:#262626;transform:scaleX(0.7508);">Filter</div>
<svg style="position:absolute;left:1254.5px;top:99px;" width="6" height="4" viewBox="0 0 6 4"><path d="M0.5 0.5 L5.5 0.5 L3 3.5 Z" fill="#444"/></svg>
<svg style="position:absolute;left:1269px;top:56px;" width="22" height="22" viewBox="0 0 22 22"><circle cx="13.5" cy="8" r="6.5" fill="none" stroke="#3c78c8" stroke-width="2.2"/><path d="M8.5 13L2 19.5" stroke="#3c78c8" stroke-width="3" stroke-linecap="round"/></svg>
<div class="t" style="left:1266.30px;top:82.00px;font-size:10.5px;line-height:12px;color:#262626;transform:scaleX(0.9029);">Find &amp;</div>
<div class="t" style="left:1265.00px;top:94.00px;font-size:10.5px;line-height:12px;color:#262626;transform:scaleX(0.7879);">Select</div>
<svg style="position:absolute;left:1289.5px;top:99px;" width="6" height="4" viewBox="0 0 6 4"><path d="M0.5 0.5 L5.5 0.5 L3 3.5 Z" fill="#444"/></svg>
<div style="position:absolute;left:0px;top:122px;width:1400px;height:29px;background:#e6e6e6"></div>
<div style="position:absolute;left:5px;top:130px;width:78.5px;height:20.5px;background:#fff;border:1px solid #d4d4d4;box-sizing:border-box"></div>
<div class="t" style="left:10.20px;top:135.00px;font-size:10.5px;line-height:12px;color:#333;transform:scaleX(0.8897);">R13C7</div>
<svg style="position:absolute;left:72.5px;top:139px;" width="6" height="4" viewBox="0 0 6 4"><path d="M0 0L6 0L3 3Z" fill="#666"/></svg>
<div style="position:absolute;left:95px;top:137px;width:1.2px;height:1.2px;background:#999"></div>
<div style="position:absolute;left:95px;top:140px;width:1.2px;height:1.2px;background:#999"></div>
<div style="position:absolute;left:95px;top:143px;width:1.2px;height:1.2px;background:#999"></div>
<div style="position:absolute;left:107px;top:130px;width:85px;height:20.5px;background:#fff;border:1px solid #d4d4d4;box-sizing:border-box"></div>
<svg style="position:absolute;left:117.5px;top:137px;" width="9" height="9" viewBox="0 0 9 9"><path d="M0.5 0.5L8.5 8.5M8.5 0.5L0.5 8.5" stroke="#bdbdbd" stroke-width="1.1"/></svg>
<svg style="position:absolute;left:145px;top:137px;" width="10" height="9" viewBox="0 0 10 9"><path d="M0.5 5L3.5 8L9.5 0.5" fill="none" stroke="#bdbdbd" stroke-width="1.2"/></svg>
<div class="t" style="left:173.5px;top:134px;font-family:'Liberation Serif';font-style:italic;font-weight:700;font-size:12px;line-height:12px;color:#404040">f<span style="font-size:9.5px;margin-left:-0.5px">x</span></div>
<div style="position:absolute;left:195px;top:130px;width:1200px;height:20.5px;background:#fff;border:1px solid #d4d4d4;box-sizing:border-box"></div>
<svg style="position:absolute;left:1386.5px;top:138px;" width="6" height="4" viewBox="0 0 6 4"><path d="M0.5 0.5L3 3L5.5 0.5" fill="none" stroke="#555" stroke-width="1.1"/></svg>
<div style="position:absolute;left:0px;top:151px;width:1383px;height:20px;background:#e6e6e6"></div>
<div style="position:absolute;left:0px;top:171px;width:21px;height:213px;background:#e6e6e6"></div>
<div style="position:absolute;left:21px;top:171px;width:1362px;height:213px;background:#fff"></div>
<div style="position:absolute;left:614.3px;top:151px;width:86.1px;height:20px;background:#d2d2d2"></div>
<div style="position:absolute;left:127px;top:158px;width:1px;height:13px;background:#bdbdbd"></div>
<div style="position:absolute;left:210px;top:158px;width:1px;height:13px;background:#bdbdbd"></div>
<div style="position:absolute;left:284px;top:158px;width:1px;height:13px;background:#bdbdbd"></div>
<div style="position:absolute;left:442px;top:158px;width:1px;height:13px;background:#bdbdbd"></div>
<div style="position:absolute;left:528px;top:158px;width:1px;height:13px;background:#bdbdbd"></div>
<div style="position:absolute;left:614px;top:158px;width:1px;height:13px;background:#bdbdbd"></div>
<div style="position:absolute;left:700px;top:158px;width:1px;height:13px;background:#bdbdbd"></div>
<div style="position:absolute;left:786px;top:158px;width:1px;height:13px;background:#bdbdbd"></div>
<div style="position:absolute;left:872px;top:158px;width:1px;height:13px;background:#bdbdbd"></div>
<div style="position:absolute;left:958px;top:158px;width:1px;height:13px;background:#bdbdbd"></div>
<div style="position:absolute;left:1044px;top:158px;width:1px;height:13px;background:#bdbdbd"></div>
<div style="position:absolute;left:1130px;top:158px;width:1px;height:13px;background:#bdbdbd"></div>
<div style="position:absolute;left:1217px;top:158px;width:1px;height:13px;background:#bdbdbd"></div>
<div style="position:absolute;left:1303px;top:158px;width:1px;height:13px;background:#bdbdbd"></div>
<div style="position:absolute;left:0px;top:170.6px;width:1383px;height:1px;background:#ababab"></div>
<div style="position:absolute;left:20.5px;top:158px;width:1px;height:226px;background:#ababab"></div>
<div style="position:absolute;left:614.3px;top:169.4px;width:86.1px;height:2px;background:#217346"></div>
<svg style="position:absolute;left:10px;top:161.5px;" width="9" height="8" viewBox="0 0 9 8"><path d="M8.5 0.5V7.5H0.5Z" fill="#b4b4b4"/></svg>
<div class="t" style="left:71.09px;top:158.00px;font-size:10.5px;line-height:12px;color:#444;">1</div>
<div class="t" style="left:165.59px;top:158.00px;font-size:10.5px;line-height:12px;color:#444;">2</div>
<div class="t" style="left:244.09px;top:158.00px;font-size:10.5px;line-height:12px;color:#444;">3</div>
<div class="t" style="left:360.34px;top:158.00px;font-size:10.5px;line-height:12px;color:#444;">4</div>
<div class="t" style="left:482.64px;top:158.00px;font-size:10.5px;line-height:12px;color:#444;">5</div>
<div class="t" style="left:568.54px;top:158.00px;font-size:10.5px;line-height:12px;color:#444;">6</div>
<div class="t" style="left:654.44px;top:158.00px;font-size:10.5px;line-height:12px;color:#1e5e3a;">7</div>
<div class="t" style="left:740.54px;top:158.00px;font-size:10.5px;line-height:12px;color:#444;">8</div>
<div class="t" style="left:826.64px;top:158.00px;font-size:10.5px;line-height:12px;color:#444;">9</div>
<div class="t" style="left:909.82px;top:158.00px;font-size:10.5px;line-height:12px;color:#444;">10</div>
<div class="t" style="left:996.29px;top:158.00px;font-size:10.5px;line-height:12px;color:#444;">11</div>
<div class="t" style="left:1082.02px;top:158.00px;font-size:10.5px;line-height:12px;color:#444;">12</div>
<div class="t" style="left:1168.12px;top:158.00px;font-size:10.5px;line-height:12px;color:#444;">13</div>
<div class="t" style="left:1254.22px;top:158.00px;font-size:10.5px;line-height:12px;color:#444;">14</div>
<div class="t" style="left:1341.17px;top:158.00px;font-size:10.5px;line-height:12px;color:#444;">15</div>
<div style="position:absolute;left:0px;top:184.5px;width:21px;height:1px;background:#c6c6c6"></div>
<div class="t" style="left:7.92px;top:173.00px;font-size:10px;line-height:11px;color:#444;">1</div>
<div style="position:absolute;left:0px;top:279.5px;width:21px;height:1px;background:#c6c6c6"></div>
<div class="t" style="left:7.92px;top:268.00px;font-size:10px;line-height:11px;color:#444;">2</div>
<div style="position:absolute;left:0px;top:292.5px;width:21px;height:1px;background:#c6c6c6"></div>
<div class="t" style="left:7.92px;top:281.00px;font-size:10px;line-height:11px;color:#444;">3</div>
<div style="position:absolute;left:0px;top:315.5px;width:21px;height:1px;background:#c6c6c6"></div>
<div class="t" style="left:7.92px;top:303.00px;font-size:10px;line-height:11px;color:#444;">4</div>
<div style="position:absolute;left:0px;top:329.5px;width:21px;height:1px;background:#c6c6c6"></div>
<div class="t" style="left:7.92px;top:317.00px;font-size:10px;line-height:11px;color:#444;">5</div>
<div style="position:absolute;left:0px;top:343.5px;width:21px;height:1px;background:#c6c6c6"></div>
<div class="t" style="left:7.92px;top:331.00px;font-size:10px;line-height:11px;color:#444;">6</div>
<div style="position:absolute;left:0px;top:357.5px;width:21px;height:1px;background:#c6c6c6"></div>
<div class="t" style="left:7.92px;top:345.00px;font-size:10px;line-height:11px;color:#444;">7</div>
<div style="position:absolute;left:0px;top:370.5px;width:21px;height:1px;background:#c6c6c6"></div>
<div class="t" style="left:7.92px;top:358.00px;font-size:10px;line-height:11px;color:#444;">8</div>
<div style="position:absolute;left:0px;top:383.5px;width:21px;height:1px;background:#c6c6c6"></div>
<div class="t" style="left:7.92px;top:373.00px;font-size:10px;line-height:11px;color:#444;">9</div>
<div style="position:absolute;left:127px;top:185px;width:83px;height:95px;background:#f2f2f2"></div>
<div style="position:absolute;left:614.3px;top:185px;width:769px;height:95px;background:#f2f2f2"></div>
<div style="position:absolute;left:21px;top:280px;width:1362px;height:13px;background:#f2f2f2"></div>
<div style="position:absolute;left:21px;top:316px;width:263px;height:13.5px;background:#d9d9d9"></div>
<div style="position:absolute;left:284px;top:329.5px;width:330.3px;height:14px;background:#f7c08e"></div>
<div style="position:absolute;left:21px;top:343.5px;width:1362px;height:14px;background:#bfbfbf"></div>
<div style="position:absolute;left:127px;top:171px;width:1px;height:14px;background:#d9d9d9"></div>
<div style="position:absolute;left:127px;top:357.5px;width:1px;height:26.5px;background:#d9d9d9"></div>
<div style="position:absolute;left:210px;top:171px;width:1px;height:14px;background:#d9d9d9"></div>
<div style="position:absolute;left:210px;top:357.5px;width:1px;height:26.5px;background:#d9d9d9"></div>
<div style="position:absolute;left:284px;top:171px;width:1px;height:14px;background:#d9d9d9"></div>
<div style="position:absolute;left:284px;top:357.5px;width:1px;height:26.5px;background:#d9d9d9"></div>
<div style="position:absolute;left:442px;top:171px;width:1px;height:14px;background:#d9d9d9"></div>
<div style="position:absolute;left:442px;top:293px;width:1px;height:23px;background:#d9d9d9"></div>
<div style="position:absolute;left:442px;top:357.5px;width:1px;height:26.5px;background:#d9d9d9"></div>
<div style="position:absolute;left:528px;top:171px;width:1px;height:14px;background:#d9d9d9"></div>
<div style="position:absolute;left:528px;top:293px;width:1px;height:23px;background:#d9d9d9"></div>
<div style="position:absolute;left:528px;top:357.5px;width:1px;height:26.5px;background:#d9d9d9"></div>
<div style="position:absolute;left:614px;top:171px;width:1px;height:14px;background:#d9d9d9"></div>
<div style="position:absolute;left:614px;top:293px;width:1px;height:23px;background:#d9d9d9"></div>
<div style="position:absolute;left:614px;top:357.5px;width:1px;height:26.5px;background:#d9d9d9"></div>
<div style="position:absolute;left:700px;top:171px;width:1px;height:14px;background:#d9d9d9"></div>
<div style="position:absolute;left:700px;top:293px;width:1px;height:23px;background:#d9d9d9"></div>
<div style="position:absolute;left:700px;top:357.5px;width:1px;height:26.5px;background:#d9d9d9"></div>
<div style="position:absolute;left:786px;top:171px;width:1px;height:14px;background:#d9d9d9"></div>
<div style="position:absolute;left:786px;top:293px;width:1px;height:23px;background:#d9d9d9"></div>
<div style="position:absolute;left:786px;top:357.5px;width:1px;height:26.5px;background:#d9d9d9"></div>
<div style="position:absolute;left:872px;top:171px;width:1px;height:14px;background:#d9d9d9"></div>
<div style="position:absolute;left:872px;top:293px;width:1px;height:23px;background:#d9d9d9"></div>
<div style="position:absolute;left:872px;top:357.5px;width:1px;height:26.5px;background:#d9d9d9"></div>
<div style="position:absolute;left:958px;top:171px;width:1px;height:14px;background:#d9d9d9"></div>
<div style="position:absolute;left:958px;top:293px;width:1px;height:23px;background:#d9d9d9"></div>
<div style="position:absolute;left:958px;top:357.5px;width:1px;height:26.5px;background:#d9d9d9"></div>
<div style="position:absolute;left:1044px;top:171px;width:1px;height:14px;background:#d9d9d9"></div>
<div style="position:absolute;left:1044px;top:293px;width:1px;height:23px;background:#d9d9d9"></div>
<div style="position:absolute;left:1044px;top:357.5px;width:1px;height:26.5px;background:#d9d9d9"></div>
<div style="position:absolute;left:1130px;top:171px;width:1px;height:14px;background:#d9d9d9"></div>
<div style="position:absolute;left:1130px;top:293px;width:1px;height:23px;background:#d9d9d9"></div>
<div style="position:absolute;left:1130px;top:357.5px;width:1px;height:26.5px;background:#d9d9d9"></div>
<div style="position:absolute;left:1217px;top:171px;width:1px;height:14px;background:#d9d9d9"></div>
<div style="position:absolute;left:1217px;top:293px;width:1px;height:23px;background:#d9d9d9"></div>
<div style="position:absolute;left:1217px;top:357.5px;width:1px;height:26.5px;background:#d9d9d9"></div>
<div style="position:absolute;left:1303px;top:171px;width:1px;height:14px;background:#d9d9d9"></div>
<div style="position:absolute;left:1303px;top:293px;width:1px;height:23px;background:#d9d9d9"></div>
<div style="position:absolute;left:1303px;top:357.5px;width:1px;height:26.5px;background:#d9d9d9"></div>
<div style="position:absolute;left:284px;top:185px;width:1px;height:95px;background:#d9d9d9"></div>
<div style="position:absolute;left:442px;top:185px;width:1px;height:95px;background:#d9d9d9"></div>
<div style="position:absolute;left:528px;top:185px;width:1px;height:95px;background:#d9d9d9"></div>
<div style="position:absolute;left:442px;top:316px;width:1px;height:13.5px;background:#d9d9d9"></div>
<div style="position:absolute;left:528px;top:316px;width:1px;height:13.5px;background:#d9d9d9"></div>
<div style="position:absolute;left:614px;top:316px;width:1px;height:13.5px;background:#d9d9d9"></div>
<div style="position:absolute;left:700px;top:316px;width:1px;height:13.5px;background:#d9d9d9"></div>
<div style="position:absolute;left:786px;top:316px;width:1px;height:13.5px;background:#d9d9d9"></div>
<div style="position:absolute;left:872px;top:316px;width:1px;height:13.5px;background:#d9d9d9"></div>
<div style="position:absolute;left:958px;top:316px;width:1px;height:13.5px;background:#d9d9d9"></div>
<div style="position:absolute;left:1044px;top:316px;width:1px;height:13.5px;background:#d9d9d9"></div>
<div style="position:absolute;left:1130px;top:316px;width:1px;height:13.5px;background:#d9d9d9"></div>
<div style="position:absolute;left:1217px;top:316px;width:1px;height:13.5px;background:#d9d9d9"></div>
<div style="position:absolute;left:1303px;top:316px;width:1px;height:13.5px;background:#d9d9d9"></div>
<div style="position:absolute;left:614px;top:185px;width:1px;height:95px;background:#d9d9d9"></div>
<div style="position:absolute;left:21px;top:184.5px;width:106px;height:1px;background:#d9d9d9"></div>
<div style="position:absolute;left:210px;top:184.5px;width:404.29999999999995px;height:1px;background:#d9d9d9"></div>
<div style="position:absolute;left:21px;top:315.5px;width:1361.5px;height:1px;background:#d9d9d9"></div>
<div style="position:absolute;left:21px;top:370.5px;width:1361.5px;height:1px;background:#d9d9d9"></div>
<div style="position:absolute;left:21px;top:383.5px;width:1361.5px;height:1px;background:#d9d9d9"></div>
<div style="position:absolute;left:21px;top:329px;width:507.6px;height:1px;background:#2b2b2b"></div>
<div style="position:absolute;left:528.6px;top:329.5px;width:85.7px;height:2px;background:#8a6244"></div>
<div style="position:absolute;left:614.3px;top:329.5px;width:258.3px;height:2px;background:#5e7f8d"></div>
<div style="position:absolute;left:872.6px;top:329.5px;width:258.3px;height:2px;background:#6c6777"></div>
<div style="position:absolute;left:1130.9px;top:329.5px;width:252px;height:2px;background:#61674d"></div>
<div style="position:absolute;left:21px;top:343px;width:1362px;height:1px;background:#2b2b2b"></div>
<div style="position:absolute;left:127px;top:329.5px;width:1px;height:14px;background:#1a1a1a"></div>
<div style="position:absolute;left:210px;top:329.5px;width:1px;height:14px;background:#1a1a1a"></div>
<div style="position:absolute;left:284px;top:329.5px;width:1px;height:14px;background:#1a1a1a"></div>
<div style="position:absolute;left:442px;top:329.5px;width:1px;height:14px;background:#1a1a1a"></div>
<div style="position:absolute;left:528px;top:329.5px;width:1px;height:14px;background:#1a1a1a"></div>
<div style="position:absolute;left:1382.5px;top:171px;width:1px;height:213px;background:#bdbdbd"></div>
<div style="position:absolute;left:1383px;top:151px;width:17px;height:233px;background:#e6e6e6"></div>
<div class="t" style="left:747.10px;top:220.00px;font-size:24px;line-height:27px;color:#111;transform:scaleX(1.0184);">Enter a heading for your report here if you wish</div>
<div class="t" style="left:133.95px;top:213.00px;font-size:10px;line-height:11px;color:#222;transform:scaleX(0.9637);">you may wish to</div>
<div class="t" style="left:139.30px;top:227.00px;font-size:10px;line-height:11px;color:#222;transform:scaleX(0.9637);">add your logo</div>
<div class="t" style="left:158.86px;top:241.00px;font-size:10px;line-height:11px;color:#222;transform:scaleX(0.9637);">here</div>
<div class="t" style="left:22.80px;top:281.00px;font-size:9.5px;line-height:11px;color:#222;transform:scaleX(0.9671);">Username</div>
<div class="t" style="left:130.30px;top:281.00px;font-size:9.5px;line-height:11px;color:#222;transform:scaleX(0.9631);">Customer name</div>
<div class="t" style="left:229.70px;top:281.00px;font-size:9.5px;line-height:11px;color:#222;transform:scaleX(0.9830);">Location</div>
<div class="t" style="left:23.20px;top:303.00px;font-size:8.5px;line-height:10px;color:#111;transform:scaleX(0.9278);">$startItemisedPlusPlus</div>
<div class="t" style="left:22.80px;top:315.00px;font-size:10.5px;line-height:12px;color:#333;transform:scaleX(0.8865);">%USER%</div>
<div class="t" style="left:130.00px;top:318.00px;font-size:8.5px;line-height:10px;color:#333;transform:scaleX(0.9478);">%CUSTOMER%</div>
<div class="t" style="left:213.60px;top:316.00px;font-size:10px;line-height:11px;color:#333;transform:scaleX(0.9112);">%LOCATION%</div>
<div class="t" style="left:287.00px;top:317.00px;font-size:9.5px;line-height:11px;color:#222;transform:scaleX(0.9436);">%USER_Attribute_phoneNumber%</div>
<div style="position:absolute;left:443.5px;top:316px;width:84.6px;height:13px;overflow:hidden">
<div class="t" style="left:1.50px;top:1px;font-size:9.5px;line-height:11px;color:#222;transform:scaleX(0.98)">%@[unique name]%</div></div>
<div style="position:absolute;left:529.6px;top:316px;width:84.2px;height:13px;overflow:hidden">
<div class="t" style="left:1.50px;top:1px;font-size:9.5px;line-height:11px;color:#222;transform:scaleX(0.98)">%@[unique name]%</div></div>
<div style="position:absolute;left:615.3px;top:316px;width:84.6px;height:13px;overflow:hidden">
<div class="t" style="left:1.50px;top:1px;font-size:9.5px;line-height:11px;color:#222;transform:scaleX(0.98)">%@[unique name]%</div></div>
<div style="position:absolute;left:701.4px;top:316px;width:84.6px;height:13px;overflow:hidden">
<div class="t" style="left:1.50px;top:1px;font-size:9.5px;line-height:11px;color:#222;transform:scaleX(0.98)">%@[unique name]%</div></div>
<div style="position:absolute;left:787.5px;top:316px;width:84.6px;height:13px;overflow:hidden">
<div class="t" style="left:1.50px;top:1px;font-size:9.5px;line-height:11px;color:#222;transform:scaleX(0.98)">%@[unique name]%</div></div>
<div style="position:absolute;left:873.6px;top:316px;width:84.6px;height:13px;overflow:hidden">
<div class="t" style="left:1.50px;top:1px;font-size:9.5px;line-height:11px;color:#222;transform:scaleX(0.98)">%@[unique name]%</div></div>
<div style="position:absolute;left:959.7px;top:316px;width:84.6px;height:13px;overflow:hidden">
<div class="t" style="left:1.50px;top:1px;font-size:9.5px;line-height:11px;color:#222;transform:scaleX(0.98)">%@[unique name]%</div></div>
<div style="position:absolute;left:1045.8px;top:316px;width:84.6px;height:13px;overflow:hidden">
<div class="t" style="left:1.50px;top:1px;font-size:9.5px;line-height:11px;color:#222;transform:scaleX(0.98)">%@[unique name]%</div></div>
<div style="position:absolute;left:1131.9px;top:316px;width:84.6px;height:13px;overflow:hidden">
<div class="t" style="left:1.50px;top:1px;font-size:9.5px;line-height:11px;color:#222;transform:scaleX(0.98)">%@[unique name]%</div></div>
<div style="position:absolute;left:1218.0px;top:316px;width:84.6px;height:13px;overflow:hidden">
<div class="t" style="left:1.50px;top:1px;font-size:9.5px;line-height:11px;color:#222;transform:scaleX(0.98)">%@[unique name]%</div></div>
<div style="position:absolute;left:1304.1px;top:316px;width:77.9px;height:13px;overflow:hidden">
<div class="t" style="left:1.50px;top:1px;font-size:9.5px;line-height:11px;color:#222;transform:scaleX(0.98)">%@[unique name]%</div></div>
<svg style="position:absolute;left:438.5px;top:280px;" width="4" height="4" viewBox="0 0 4 4"><path d="M0 0H4V4Z" fill="#ff0000"/></svg>
<svg style="position:absolute;left:123.5px;top:293.8px;" width="4" height="4" viewBox="0 0 4 4"><path d="M0 0H4V4Z" fill="#ff0000"/></svg>
<svg style="position:absolute;left:524.6px;top:316px;" width="4" height="4" viewBox="0 0 4 4"><path d="M0 0H4V4Z" fill="#ff0000"/></svg>
<svg style="position:absolute;left:524.6px;top:329.8px;" width="4" height="4" viewBox="0 0 4 4"><path d="M0 0H4V4Z" fill="#ff0000"/></svg>
<svg style="position:absolute;left:524.6px;top:344px;" width="4" height="4" viewBox="0 0 4 4"><path d="M0 0H4V4Z" fill="#ff0000"/></svg>
<svg style="position:absolute;left:0;top:0" width="1400" height="424" viewBox="0 0 1400 424"><line x1="471.5" y1="252.5" x2="447.0992214771034" y2="276.02932214707886" stroke="#111" stroke-width="0.9"/><path d="M443.5 279.5 L445.2944689935844 274.15772697898507 L448.9039739606224 277.90091731517265 Z" fill="#111"/><line x1="142.5" y1="294" x2="133.47154576959903" y2="294.96733438182866" stroke="#111" stroke-width="0.9"/><path d="M128.5 295.5 L133.19455964814995 292.38213058163717 L133.74853189104812 297.55253818202016 Z" fill="#111"/><line x1="550.5" y1="310" x2="534.7859067159309" y2="314.7525550420111" stroke="#111" stroke-width="0.9"/><path d="M530 316.2 L534.0332353377767 312.26388354972704 L535.5385780940851 317.2412265342952 Z" fill="#111"/><line x1="547.5" y1="331.5" x2="535.9955065238019" y2="331.01193057979765" stroke="#111" stroke-width="0.9"/><path d="M531 330.8 L536.1057104252966 328.4142671874207 L535.8853026223071 333.6095939721746 Z" fill="#111"/><line x1="543.5" y1="349.5" x2="535.7621207359966" y2="347.02387863551894" stroke="#111" stroke-width="0.9"/><path d="M531 345.5 L536.5545376264664 344.5475758528007 L534.9697038455269 349.50018141823716 Z" fill="#111"/></svg>
<div style="position:absolute;left:471.4px;top:251.7px;width:655.6px;height:30.5px;background:rgba(189,220,248,0.93);border:1px solid #4a4a4a;box-sizing:border-box;box-shadow:1px 1.5px 0 #000;"></div>
<div class="t" style="left:473.60px;top:253.00px;font-size:8.6px;line-height:10px;color:#1e1e1e;transform:scaleX(0.9860);">Any headings or other information entered on this line or above will come out on the report exactly as entered.  Formatting and formulae will also be exactly as entered,</div>
<div class="t" style="left:473.60px;top:264.00px;font-size:8.6px;line-height:10px;color:#1e1e1e;transform:scaleX(0.9860);">including any that reference items populated below.</div>
<div style="position:absolute;left:142.5px;top:293.7px;width:258.2px;height:21.5px;background:rgba(255,102,102,0.96);border:1px solid #4a4a4a;box-sizing:border-box;box-shadow:1px 1.5px 0 #000;"></div>
<div class="t" style="left:144.50px;top:296.00px;font-size:8.2px;line-height:9px;color:#2a0e0e;transform:scaleX(0.9720);">this MUST be left here DO NOT DELETE OR CHANGE.  Insert lines</div>
<div class="t" style="left:144.50px;top:306.00px;font-size:8.2px;line-height:9px;color:#2a0e0e;transform:scaleX(0.9720);">above if necessary.</div>
<div style="position:absolute;left:550.5px;top:309.4px;width:840px;height:13.5px;background:rgba(175,175,175,0.62);border:1px solid #4a4a4a;box-sizing:border-box;box-shadow:1px 1.5px 0 #000;"></div>
<div class="t" style="left:552.60px;top:310.00px;font-size:8.4px;line-height:10px;color:#1e1e1e;transform:scaleX(0.9891);">On this line enter unique names as used in the magic5 template.  These can also be standard items such as USER, CUSTOMER, LOCATION.  They must have a % (percent sign) at the start and end.</div>
<div style="position:absolute;left:547.4px;top:331.4px;width:840px;height:14.2px;background:#f7f7dc;border:1px solid #555;box-sizing:border-box;box-shadow:1px 1.5px 0 #000"></div>
<div style="position:absolute;left:548.4px;top:332.4px;width:66px;height:12px;background:#fdf0dc"></div>
<div style="position:absolute;left:614.3px;top:332.4px;width:258.3px;height:12px;background:#f1f6e2"></div>
<div style="position:absolute;left:872.6px;top:332.4px;width:258.3px;height:12px;background:#f4f0df"></div>
<div style="position:absolute;left:1130.9px;top:332.4px;width:260px;height:12px;background:#f5f7dc"></div>
<div style="position:absolute;left:614px;top:332.4px;width:1px;height:12px;background:#dcdccc"></div>
<div style="position:absolute;left:700px;top:332.4px;width:1px;height:12px;background:#dcdccc"></div>
<div style="position:absolute;left:786px;top:332.4px;width:1px;height:12px;background:#dcdccc"></div>
<div style="position:absolute;left:872px;top:332.4px;width:1px;height:12px;background:#dcdccc"></div>
<div style="position:absolute;left:958px;top:332.4px;width:1px;height:12px;background:#dcdccc"></div>
<div style="position:absolute;left:1044px;top:332.4px;width:1px;height:12px;background:#dcdccc"></div>
<div style="position:absolute;left:1130px;top:332.4px;width:1px;height:12px;background:#dcdccc"></div>
<div style="position:absolute;left:1217px;top:332.4px;width:1px;height:12px;background:#dcdccc"></div>
<div style="position:absolute;left:1303px;top:332.4px;width:1px;height:12px;background:#dcdccc"></div>
<div class="t" style="left:549.60px;top:332.00px;font-size:8.4px;line-height:10px;color:#1e1e1e;transform:scaleX(1.0052);">On this line include any standard formatting, such as cell borders or colours, font sizes and effects.</div>
<div style="position:absolute;left:543.5px;top:349.2px;width:850px;height:15px;background:#c8c8c8;border:1px solid #4a4a4a;box-sizing:border-box;box-shadow:1px 1.5px 0 #000;"></div>
<div class="t" style="left:546.00px;top:350.00px;font-size:8.4px;line-height:10px;color:#1e1e1e;">On this line include any conditional formatting such as changing colour when the contents are 'No'.  See Excel help for more on conditional formatting.</div>
<div style="position:absolute;left:1383px;top:151px;width:17px;height:233px;background:#e6e6e6"></div>
<div style="position:absolute;left:1385px;top:160px;width:11.6px;height:11px;background:#fff;border:1px solid #c6c6c6;box-sizing:border-box"></div>
<svg style="position:absolute;left:1388px;top:163.5px;" width="6" height="4" viewBox="0 0 6 4"><path d="M0.5 3.5L3 0.5L5.5 3.5Z" fill="#555"/></svg>
<div style="position:absolute;left:1385.5px;top:171.5px;width:10.6px;height:151px;background:#fff;border:1px solid #c6c6c6;box-sizing:border-box"></div>
<div style="position:absolute;left:1385px;top:374px;width:11.6px;height:10.5px;background:#fff;border:1px solid #c6c6c6;box-sizing:border-box"></div>
<svg style="position:absolute;left:1388px;top:377.5px;" width="6" height="4" viewBox="0 0 6 4"><path d="M0.5 0.5L5.5 0.5L3 3.5Z" fill="#555"/></svg>
<div style="position:absolute;left:0px;top:384px;width:1400px;height:22px;background:#e6e6e6;border-top:2px solid #c9c9c9;border-bottom:1px solid #d0d0d0;box-sizing:border-box"></div>
<svg style="position:absolute;left:21px;top:392px;" width="4" height="7" viewBox="0 0 4 7"><path d="M3.5 0L0 3.5L3.5 7Z" fill="#c0c0c0"/></svg>
<svg style="position:absolute;left:44px;top:392px;" width="4" height="7" viewBox="0 0 4 7"><path d="M0 0L3.5 3.5L0 7Z" fill="#c0c0c0"/></svg>
<div style="position:absolute;left:78.2px;top:384px;width:42.3px;height:20px;background:#fff;border-left:1px solid #bdbdbd;border-right:1px solid #bdbdbd;box-sizing:border-box"></div>
<div style="position:absolute;left:78.7px;top:402px;width:41.3px;height:2px;background:#217346"></div>
<div class="t" style="left:88.50px;top:389.00px;font-size:10px;line-height:11px;color:#217346;font-weight:700;transform:scaleX(0.9885);">Data</div>
<div class="t" style="left:129.70px;top:389.00px;font-size:10.5px;line-height:12px;color:#444;transform:scaleX(0.9310);">Chart</div>
<div style="position:absolute;left:164px;top:388px;width:1px;height:15px;background:#b0b0b0"></div>
<div class="t" style="left:174.00px;top:389.00px;font-size:10.5px;line-height:12px;color:#444;transform:scaleX(0.9013);">Sheet3</div>
<div style="position:absolute;left:213.5px;top:388px;width:1px;height:15px;background:#b0b0b0"></div>
<svg style="position:absolute;left:239.5px;top:389px;" width="13" height="13" viewBox="0 0 13 13"><circle cx="6.5" cy="6.5" r="5.8" fill="none" stroke="#666" stroke-width="1.1"/><path d="M6.5 3v7M3 6.5h7" stroke="#666" stroke-width="1.3"/></svg>
<div style="position:absolute;left:839.5px;top:392px;width:1.3px;height:1.3px;background:#888"></div>
<div style="position:absolute;left:839.5px;top:395px;width:1.3px;height:1.3px;background:#888"></div>
<div style="position:absolute;left:839.5px;top:398px;width:1.3px;height:1.3px;background:#888"></div>
<div style="position:absolute;left:852.4px;top:390px;width:12px;height:11.2px;background:#fff;border:1px solid #c6c6c6;box-sizing:border-box"></div>
<svg style="position:absolute;left:856px;top:393px;" width="4" height="6" viewBox="0 0 4 6"><path d="M3.5 0L0 3L3.5 6Z" fill="#444"/></svg>
<div style="position:absolute;left:864px;top:390px;width:394px;height:11.2px;background:#fff;border:1px solid #c6c6c6;box-sizing:border-box"></div>
<div style="position:absolute;left:1258px;top:390px;width:114.6px;height:11.2px;background:#dadada"></div>
<div style="position:absolute;left:1372.6px;top:390px;width:12px;height:11.2px;background:#fff;border:1px solid #c6c6c6;box-sizing:border-box"></div>
<svg style="position:absolute;left:1377px;top:393px;" width="4" height="6" viewBox="0 0 4 6"><path d="M0 0L3.5 3L0 6Z" fill="#444"/></svg>
<div style="position:absolute;left:0px;top:406px;width:1400px;height:18px;background:#f3f3f3;border-top:1px solid #dadada;box-sizing:border-box"></div>
<div class="t" style="left:6.60px;top:409.00px;font-size:10px;line-height:11px;color:#333;transform:scaleX(0.8097);">Ready</div>
<div style="position:absolute;left:1173.2px;top:407px;width:29.6px;height:15.5px;background:#c8c8c8"></div>
<svg style="position:absolute;left:1182px;top:409px;" width="11" height="11" viewBox="0 0 11 11"><rect x="0.5" y="0.5" width="10" height="10" rx="1.2" fill="#7a7a7a" stroke="#7a7a7a"/><path d="M3.8 1.5v8M7.2 1.5v8M1.5 3.8h8M1.5 7.2h8" stroke="#e8e8e8" stroke-width="0.9"/></svg>
<svg style="position:absolute;left:1212px;top:409px;" width="11" height="11" viewBox="0 0 11 11"><rect x="0.5" y="0.5" width="10" height="10" rx="1.2" fill="none" stroke="#7a7a7a" stroke-width="1.1"/><rect x="2.8" y="2.5" width="5.4" height="6" rx="0.8" fill="#c8c8c8" stroke="#8a8a8a" stroke-width="0.9"/></svg>
<svg style="position:absolute;left:1241.5px;top:409px;" width="11" height="11" viewBox="0 0 11 11"><rect x="0.5" y="0.5" width="10" height="10" rx="1.2" fill="none" stroke="#7a7a7a" stroke-width="1.1"/><path d="M3 0.5v5M5.8 0.5v4M8 0.5v5.5H0.5" fill="none" stroke="#7a7a7a" stroke-width="0.9"/></svg>
<div style="position:absolute;left:1265.5px;top:414px;width:5px;height:1.5px;background:#444"></div>
<div style="position:absolute;left:1273.5px;top:414.5px;width:77px;height:1px;background:#c0c0c0"></div>
<div style="position:absolute;left:1307px;top:410px;width:4px;height:8.5px;background:#666"></div>
<div style="position:absolute;left:1353.5px;top:414px;width:6.5px;height:1.5px;background:#444"></div>
<div style="position:absolute;left:1356px;top:411px;width:1.5px;height:7.5px;background:#444"></div>
<div class="t" style="left:1368.30px;top:408.00px;font-size:10px;line-height:11px;color:#333;transform:scaleX(0.7950);">90%</div>
<div style="position:absolute;left:0px;top:50px;width:1px;height:374px;background:#217346"></div>
<div style="position:absolute;left:1398.5px;top:50px;width:1.5px;height:374px;background:#217346"></div>
<div style="position:absolute;left:0px;top:422px;width:1400px;height:1px;background:#7fa58f"></div>
<div style="position:absolute;left:0px;top:423px;width:1400px;height:1px;background:#217346"></div>
</body></html>
